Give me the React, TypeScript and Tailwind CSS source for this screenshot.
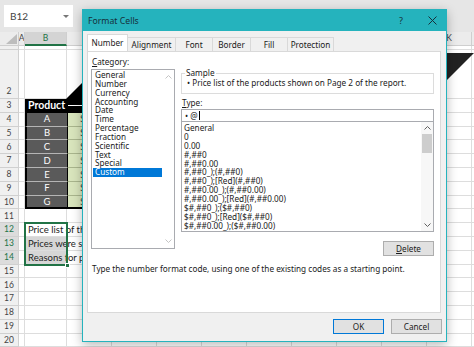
import React from 'react';

type Col = { key: string; cls: string };
const COLS: Col[] = [
  { key: 'A', cls: 'w-[6px]' },
  { key: 'B', cls: 'w-[42px]' },
  { key: 'C', cls: 'w-[45px]' },
  { key: 'D', cls: 'w-[45px]' },
  { key: 'E', cls: 'w-[45px]' },
  { key: 'F', cls: 'w-[45px]' },
  { key: 'G', cls: 'w-[45px]' },
  { key: 'H', cls: 'w-[45px]' },
  { key: 'I', cls: 'w-[45px]' },
  { key: 'J', cls: 'w-[45px]' },
  { key: 'K', cls: 'w-[45px]' },
  { key: 'L', cls: 'w-[45px]' },
];

const LETTERS = ['A', 'B', 'C', 'D', 'E', 'F', 'G'];

const ROW_TEXT: Record<number, string> = {
  12: 'Price list of the products shown on Page 2 of the report.',
  13: 'Prices were subject to change without notice.',
  14: 'Reasons for price changes are listed below.',
};

const CATEGORIES = [
  'General',
  'Number',
  'Currency',
  'Accounting',
  'Date',
  'Time',
  'Percentage',
  'Fraction',
  'Scientific',
  'Text',
  'Special',
  'Custom',
];

const FORMATS = [
  'General',
  '0',
  '0.00',
  '#,##0',
  '#,##0.00',
  '#,##0_);(#,##0)',
  '#,##0_);[Red](#,##0)',
  '#,##0.00_);(#,##0.00)',
  '#,##0.00_);[Red](#,##0.00)',
  '$#,##0_);($#,##0)',
  '$#,##0_);[Red]($#,##0)',
  '$#,##0.00_);($#,##0.00)',
];

function UpArrow({ color }: { color: string }) {
  return (
    <svg width="7" height="4" viewBox="0 0 7 4">
      <polyline points="0.5,3.5 3.5,0.5 6.5,3.5" fill="none" stroke={color} strokeWidth="1" />
    </svg>
  );
}
function DownArrow({ color }: { color: string }) {
  return (
    <svg width="7" height="4" viewBox="0 0 7 4">
      <polyline points="0.5,0.5 3.5,3.5 6.5,0.5" fill="none" stroke={color} strokeWidth="1" />
    </svg>
  );
}

function Cell({ row, col }: { row: number; col: string }) {
  const base = 'h-full shrink-0 border-r border-b border-[#dddddd] relative';
  const w = COLS.find((c) => c.key === col)!.cls;
  if (row === 3 && col === 'B') {
    return (
      <div className={`${w} h-full shrink-0 bg-black pl-[3px] text-[10.5px] font-bold leading-[13.8px] text-white`}>
        Product
      </div>
    );
  }
  if (row === 3 && col === 'C') {
    return (
      <div className={`${w} h-full shrink-0 flex items-center bg-black pl-[1px]`}>
        <div className="h-[1px] w-[30px] bg-white" />
      </div>
    );
  }
  if (row >= 4 && row <= 10 && col === 'B') {
    const last = row === 10;
    return (
      <div
        className={`${w} h-full shrink-0 flex items-center justify-center border-l-[2px] border-black bg-[#5a5a5a] text-[9.5px] leading-none text-white ${
          last ? 'border-b-[2px] border-b-black' : 'border-b border-b-[#b5b5b5]'
        }`}
      >
        {LETTERS[row - 4]}
      </div>
    );
  }
  if (row >= 4 && row <= 10 && col === 'C') {
    const last = row === 10;
    return (
      <div
        className={`${w} h-full shrink-0 flex items-center border-l border-black bg-[#d8e4bc] pl-[12px] text-[9.5px] leading-none text-[#333] ${
          last ? 'border-b-[2px] border-b-black' : 'border-b border-b-[#a9b58d]'
        }`}
      >
        $
      </div>
    );
  }
  if (row >= 12 && row <= 14 && col === 'B') {
    return (
      <div className={`${base} ${w} ${row === 12 ? '' : 'bg-[#d6d6d6]'} border-r-transparent`}>
        <span className="absolute left-[3px] top-0 z-[1] whitespace-nowrap text-[9.5px] leading-[13.8px] text-[#222]">
          {ROW_TEXT[row]}
        </span>
      </div>
    );
  }
  return <div className={`${base} ${w}`} />;
}

function SheetRow({ n, h }: { n: number; h: string }) {
  const sel = n >= 12 && n <= 14;
  return (
    <div className={`flex ${h}`}>
      <div
        className={`flex h-full w-[19px] shrink-0 justify-center overflow-hidden border-r border-b border-[#d0d0d0] text-[8.5px] leading-none ${
          n === 2 ? 'items-end pb-[3px]' : 'items-center'
        } ${sel ? 'bg-[#dcdcdc] text-[#217346]' : 'bg-[#f0f0f0] text-[#444]'}`}
      >
        {n === 1 ? '' : n}
      </div>
      {COLS.map((c) => (
        <Cell key={c.key} row={n} col={c.key} />
      ))}
    </div>
  );
}

function Sheet() {
  const rows: { n: number; h: string }[] = [{ n: 1, h: 'h-[4px]' }, { n: 2, h: 'h-[49px]' }];
  for (let i = 3; i <= 21; i++) rows.push({ n: i, h: 'h-[13.8px]' });
  return (
    <div className="flex flex-col">
      {/* column header */}
      <div className="flex h-[14px] bg-[#ececec]">
        <div className="relative h-full w-[19px] shrink-0 border-r border-b border-[#cfcfcf]">
          <svg className="absolute bottom-[1px] right-[1px]" width="11" height="10" viewBox="0 0 11 10">
            <polygon points="11,0 11,10 0,10" fill="#bdbdbd" />
          </svg>
        </div>
        {COLS.map((c) => (
          <div
            key={c.key}
            className={`${c.cls} flex h-full shrink-0 items-center justify-center overflow-hidden border-r border-[#cfcfcf] text-[8.5px] leading-none ${
              c.key === 'B'
                ? 'border-b-[2px] border-b-[#217346] bg-[#d4d4d4] text-[#217346]'
                : 'border-b border-b-[#cfcfcf] text-[#444]'
            }`}
          >
            {c.key === 'L' ? '' : c.key}
          </div>
        ))}
      </div>
      {rows.map((r) => (
        <SheetRow key={r.n} n={r.n} h={r.h} />
      ))}
    </div>
  );
}

function Dialog() {
  return (
    <div className="absolute left-[82px] top-[9px] z-30 flex h-[333px] w-[365px] flex-col border border-[#25b3bd] bg-[#f0f0f0] font-['Noto_Sans',sans-serif] text-[8.2px] leading-[10px] text-[#1a1a1a] shadow-[0_3px_10px_rgba(0,0,0,0.28)]">
      {/* title bar */}
      <div className="flex h-[21px] shrink-0 items-center bg-[#25b3bd] pl-[5px] pr-[9px]">
        <span className="text-[8.7px] text-[#16303a]">Format Cells</span>
        <span className="ml-auto mr-[25px] text-[9px] text-[#16303a]">?</span>
        <svg width="9" height="9" viewBox="0 0 9 9">
          <path d="M0.5 0.5 L8.5 8.5 M8.5 0.5 L0.5 8.5" stroke="#16303a" strokeWidth="1" />
        </svg>
      </div>
      {/* tabs */}
      <div className="relative z-10 flex h-[20px] shrink-0 items-end pl-[4px]">
        <div className="flex h-[17px] w-[41px] items-center justify-center border border-b-0 border-[#d9d9d9] bg-white">
          Number
        </div>
        <div className="mb-[-1px] flex h-[15px] w-[48px] items-center justify-center border border-l-0 border-[#d9d9d9]">
          Alignment
        </div>
        <div className="mb-[-1px] flex h-[15px] w-[37px] items-center justify-center border border-l-0 border-[#d9d9d9]">
          Font
        </div>
        <div className="mb-[-1px] flex h-[15px] w-[38px] items-center justify-center border border-l-0 border-[#d9d9d9]">
          Border
        </div>
        <div className="mb-[-1px] flex h-[15px] w-[37px] items-center justify-center border border-l-0 border-[#d9d9d9]">
          Fill
        </div>
        <div className="mb-[-1px] flex h-[15px] w-[46px] items-center justify-center border border-l-0 border-[#d9d9d9]">
          Protection
        </div>
      </div>
      {/* panel */}
      <div className="ml-[4px] mr-[5px] flex h-[262px] shrink-0 flex-col border border-[#d9d9d9] bg-white pt-[5px]">
        <div className="flex">
          {/* left: category */}
          <div className="ml-[3px] flex w-[84px] flex-col">
            <div className="h-[10px] pl-[1px]">
              <span className="underline decoration-[0.5px] underline-offset-[1px]">C</span>ategory:
            </div>
            <div className="mt-[2px] flex h-[180px] border border-[#a9abb0]">
              <div className="flex flex-1 flex-col pt-[1px] pl-[1px]">
                {CATEGORIES.map((c) => (
                  <div
                    key={c}
                    className={`h-[8.85px] pl-[2px] leading-[8.85px] ${c === 'Custom' ? 'bg-[#0078d7] text-white' : ''}`}
                  >
                    {c}
                  </div>
                ))}
              </div>
              <div className="flex w-[12px] flex-col items-center justify-between py-[5px]">
                <UpArrow color="#c4c4c4" />
                <DownArrow color="#c4c4c4" />
              </div>
            </div>
          </div>
          {/* right */}
          <div className="ml-[6px] flex w-[253px] flex-col pt-[16px]">
            <div className="h-[21px] border border-[#dcdcdc]">
              <div className="ml-[3px] mt-[-6px] w-fit bg-white px-[1px]">Sample</div>
              <div className="pl-[5px]">• Price list of the products shown on Page 2 of the report.</div>
            </div>
            <div className="mt-[4px] h-[10px] pl-[1px]">
              <span className="underline decoration-[0.5px] underline-offset-[1px]">T</span>ype:
            </div>
            <div className="mt-[1px] flex h-[13px] items-center border border-[#a9abb0] pl-[3px]">
              <span>• @</span>
              <span className="ml-[1px] h-[9px] w-[1px] bg-black" />
            </div>
            <div className="flex h-[110px] border border-t-0 border-[#a9abb0]">
              <div className="flex flex-1 flex-col overflow-hidden pl-[2px] pt-[2px]">
                {FORMATS.map((f) => (
                  <div key={f} className="h-[8.9px] shrink-0 whitespace-nowrap leading-[8.9px]">
                    {f}
                  </div>
                ))}
              </div>
              <div className="flex w-[12px] flex-col items-center bg-[#f7f7f7] py-[4px]">
                <UpArrow color="#606060" />
                <div className="mt-[4px] h-[19px] w-[10px] bg-[#cdcdcd]" />
                <div className="mt-auto">
                  <DownArrow color="#606060" />
                </div>
              </div>
            </div>
            <div className="mt-[9px] flex h-[15px] w-[51px] items-center justify-center self-end border border-[#adadad] bg-[#e1e1e1]">
              <span>
                <span className="underline decoration-[0.5px] underline-offset-[1px]">D</span>elete
              </span>
            </div>
          </div>
        </div>
        <div className="ml-[4px] mt-[8px]">
          Type the number format code, using one of the existing codes as a starting point.
        </div>
      </div>
      {/* buttons */}
      <div className="mt-[6px] flex justify-end gap-[7px] pr-[4px]">
        <div className="flex h-[15px] w-[51px] items-center justify-center border border-[#0078d7] bg-[#e1e1e1]">OK</div>
        <div className="flex h-[15px] w-[51px] items-center justify-center border border-[#adadad] bg-[#e1e1e1]">Cancel</div>
      </div>
    </div>
  );
}

export default function App() {
  return (
    <div className="relative h-[347px] w-[474px] overflow-hidden bg-white font-['Lato',sans-serif]">
      {/* top bar */}
      <div className="flex h-[32px] items-start bg-[#e6e6e6] pl-[4px] pt-[5px]">
        <div className="flex h-[22px] w-[69px] items-center justify-between bg-white pl-[6px] pr-[4px] text-[10px] text-[#444]">
          <span>B12</span>
          <svg width="6" height="3" viewBox="0 0 6 3">
            <path d="M0 0 L6 0 L3 3Z" fill="#777" />
          </svg>
        </div>
      </div>
      <Sheet />
      {/* black shape fragments */}
      <svg className="absolute left-0 top-0 z-[2]" width="474" height="347" viewBox="0 0 474 347">
        <polygon points="66,99 100,65 100,99" fill="#000" />
        <polygon points="425,53 474,53 425,102" fill="#222" />
      </svg>
      {/* selection */}
      <div className="absolute left-[24px] top-[222px] z-[3] h-[44px] w-[44px] border-2 border-[#217346]" />
      <div className="absolute left-[65px] top-[263px] z-[3] h-[5px] w-[5px] border border-white bg-[#217346]" />
      <Dialog />
    </div>
  );
}
